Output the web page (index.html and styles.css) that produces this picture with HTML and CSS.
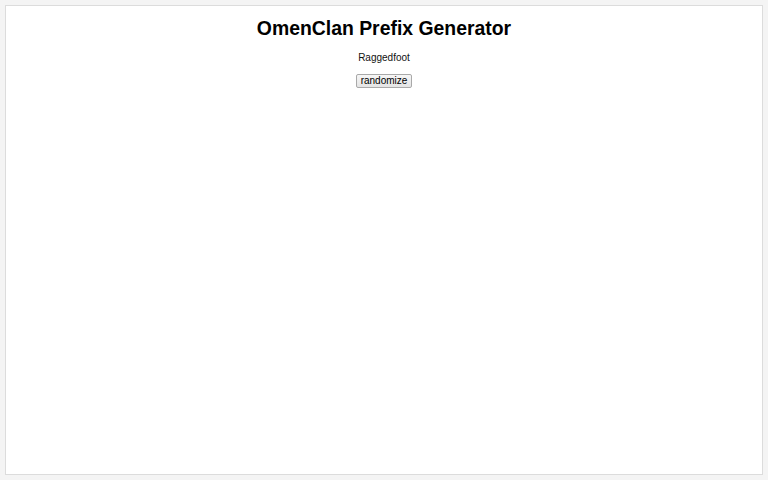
FILE: index.html
```html
<!DOCTYPE html>
<html lang="en">
<head>
<meta charset="utf-8">
<title>OmenClan Prefix Generator</title>
<link rel="stylesheet" href="styles.css">
</head>
<body>
<main class="panel">
  <h1 class="title">OmenClan Prefix Generator</h1>
  <p class="prefix">Raggedfoot</p>
  <button class="randomize" type="button">randomize</button>
</main>
</body>
</html>
```
FILE: styles.css
```css
html, body {
  height: 100%;
}
body {
  margin: 0;
  padding: 5px;
  box-sizing: border-box;
  background: #f4f4f4;
  font-family: "Liberation Sans", Arial, sans-serif;
}
.panel {
  box-sizing: border-box;
  height: 100%;
  background: #fff;
  border: 1px solid #dcdcdc;
  display: flex;
  flex-direction: column;
  align-items: center;
  padding-top: 10px;
}
.title {
  margin: 0;
  font-size: 19.4px;
  font-weight: bold;
  color: #000;
  line-height: 24px;
}
.prefix {
  margin: 12px 0 0;
  font-size: 10px;
  line-height: 12px;
  color: #111;
}
.randomize {
  margin-top: 10px;
  font-family: "Liberation Sans", Arial, sans-serif;
  font-size: 10px;
  line-height: 12px;
  padding: 0 4px;
  color: #000;
  background: linear-gradient(#f6f6f6, #e4e4e4);
  border: 1px solid #a9a9a9;
  border-radius: 2px;
}
```
